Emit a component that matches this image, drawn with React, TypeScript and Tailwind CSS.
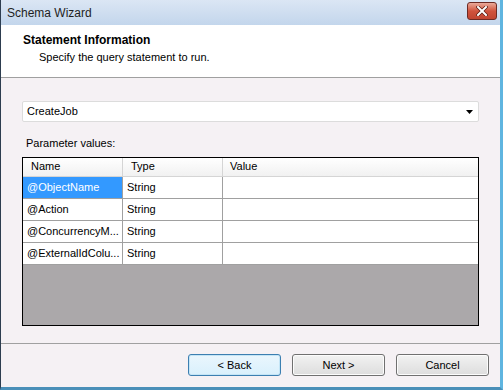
import React from 'react'

const rows = [
  { name: '@ObjectName', type: 'String', selected: true },
  { name: '@Action', type: 'String' },
  { name: '@ConcurrencyM...', type: 'String' },
  { name: '@ExternalIdColu...', type: 'String' },
]

function WinButton({ label, focused }: { label: string; focused?: boolean }) {
  return (
    <button
      className={
        'w-[93px] h-[22px] rounded-[3px] border text-[11px] text-black bg-gradient-to-b ' +
        (focused
          ? 'border-[#3c7fb1] from-[#eaf6fd] to-[#d9f0fc] shadow-[inset_0_0_0_1px_#c4e5f6]'
          : 'border-[#707070] from-[#f2f2f2] to-[#dddddd] shadow-[inset_0_0_0_1px_#fcfcfc]')
      }
    >
      {label}
    </button>
  )
}

export default function App() {
  return (
    <div
      className="w-[503px] h-[390px] flex flex-col bg-[#b9d1ea] border-l border-[#2d3d4f] border-r-[3px] border-r-[#5fb5e0] border-b-[3px] border-b-[#4a8fb8] overflow-hidden"
      style={{ fontFamily: '"Liberation Sans", Arial, sans-serif' }}
    >
      {/* title bar */}
      <div className="h-[25px] shrink-0 flex items-center justify-between pl-[6px] pr-[3px] bg-gradient-to-b from-[#dbe6f4] to-[#c3d6ec]">
        <span className="text-[12px] text-[#1e1e1e]">Schema Wizard</span>
        <div className="w-[30px] h-[18px] mb-[4px] rounded-[3px] border border-[#6d2a24] bg-gradient-to-b from-[#e9a99a] via-[#d0533d] to-[#c14531] flex items-center justify-center">
          <svg width="12" height="10" viewBox="0 0 12 10">
            <path d="M2 1 L10 9 M10 1 L2 9" stroke="#5a1a10" strokeWidth="3.4" strokeLinecap="square" />
            <path d="M2 1 L10 9 M10 1 L2 9" stroke="#ffffff" strokeWidth="2" strokeLinecap="square" />
          </svg>
        </div>
      </div>

      {/* header */}
      <div className="h-[53px] shrink-0 bg-white border-b border-[#a0a0a0] pl-[22px] pt-[7px]">
        <div className="text-[12px] font-bold text-black leading-[16px]">Statement Information</div>
        <div className="text-[11px] text-black pl-[16px] leading-[16px] mt-[1px]">Specify the query statement to run.</div>
      </div>

      {/* body */}
      <div className="flex-1 bg-[#f5f1f4] flex flex-col">
        <div className="flex-1 px-[21px] pt-[23px]">
          <div className="h-[21px] bg-white border border-[#dcdcdc] rounded-[2px] flex items-center justify-between pl-[4px] pr-[5px]">
            <span className="text-[11px] text-black">CreateJob</span>
            <svg width="7" height="4" viewBox="0 0 7 4">
              <path d="M0 0 H7 L3.5 4 Z" fill="#000" />
            </svg>
          </div>
          <div className="text-[11px] text-black mt-[13px] pl-[4px]">Parameter values:</div>
          <div className="mt-[5px] h-[169px] border border-black bg-[#aba8aa] flex flex-col">
            <div className="h-[19px] flex bg-gradient-to-b from-white to-[#f1f1f1] border-b border-[#d5d5d5] text-[11px] text-black">
              <div className="w-[100px] pl-[8px] flex items-center border-r border-[#d5d5d5]">Name</div>
              <div className="w-[100px] pl-[8px] flex items-center border-r border-[#d5d5d5]">Type</div>
              <div className="flex-1 pl-[7px] flex items-center">Value</div>
            </div>
            {rows.map((r, i) => (
              <div key={i} className="h-[22px] flex bg-white border-b border-[#a0a0a0] text-[11px]">
                <div
                  className={
                    'w-[100px] pl-[4px] flex items-center border-r border-[#a0a0a0] ' +
                    (r.selected ? 'bg-[#3399ff] text-white' : 'text-black')
                  }
                >
                  {r.name}
                </div>
                <div className="w-[100px] pl-[4px] flex items-center border-r border-[#a0a0a0] text-black">{r.type}</div>
                <div className="flex-1" />
              </div>
            ))}
          </div>
        </div>
        <div className="h-[44px] shrink-0 border-t border-[#a0a0a0] flex items-start justify-end gap-[11px] pt-[10px] pr-[11px]">
          <WinButton label="< Back" focused />
          <WinButton label="Next >" />
          <WinButton label="Cancel" />
        </div>
      </div>
    </div>
  )
}
